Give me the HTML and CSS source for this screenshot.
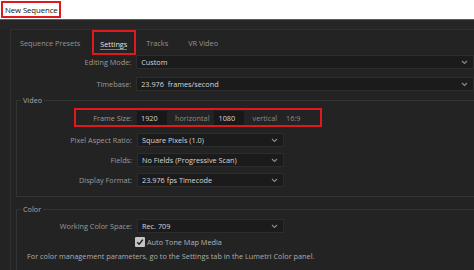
FILE: index.html
```html
<!DOCTYPE html>
<html>
<head>
<meta charset="utf-8">
<link rel="stylesheet" href="styles.css">
</head>
<body>
<header class="titlebar">
  <span class="title mark">New Sequence</span>
</header>
<main class="dialog">
  <section class="tabpanel">
    <nav class="tabs">
      <span class="tab first">Sequence Presets</span>
      <span class="tab active mark"><span class="tab-text">Settings</span></span>
      <span class="tab">Tracks</span>
      <span class="tab">VR Video</span>
    </nav>
    <div class="top-rows">
      <div class="row">
        <span class="label">Editing Mode:</span>
        <span class="select wide"><span class="value">Custom</span><svg class="chev" width="7" height="5" viewBox="0 0 7 5"><path d="M1 1 L3.5 3.5 L6 1" fill="none" stroke="#8a8a8a" stroke-width="1.1"/></svg></span>
      </div>
      <div class="row">
        <span class="label">Timebase:</span>
        <span class="select wide"><span class="value">23.976&nbsp; frames/second</span><svg class="chev" width="7" height="5" viewBox="0 0 7 5"><path d="M1 1 L3.5 3.5 L6 1" fill="none" stroke="#8a8a8a" stroke-width="1.1"/></svg></span>
      </div>
    </div>
    <fieldset class="group video">
      <legend class="legend">Video</legend>
      <div class="frame-row mark">
        <span class="label frame-label">Frame Size:</span>
        <span class="num">1920</span>
        <span class="unit">horizontal</span>
        <span class="num">1080</span>
        <span class="unit">vertical</span>
        <span class="unit ratio">16:9</span>
      </div>
      <div class="row g">
        <span class="label">Pixel Aspect Ratio:</span>
        <span class="select"><span class="value">Square Pixels (1.0)</span><svg class="chev" width="7" height="5" viewBox="0 0 7 5"><path d="M1 1 L3.5 3.5 L6 1" fill="none" stroke="#8a8a8a" stroke-width="1.1"/></svg></span>
      </div>
      <div class="row g">
        <span class="label">Fields:</span>
        <span class="select"><span class="value">No Fields (Progressive Scan)</span><svg class="chev" width="7" height="5" viewBox="0 0 7 5"><path d="M1 1 L3.5 3.5 L6 1" fill="none" stroke="#8a8a8a" stroke-width="1.1"/></svg></span>
      </div>
      <div class="row g">
        <span class="label">Display Format:</span>
        <span class="select"><span class="value">23.976 fps Timecode</span><svg class="chev" width="7" height="5" viewBox="0 0 7 5"><path d="M1 1 L3.5 3.5 L6 1" fill="none" stroke="#8a8a8a" stroke-width="1.1"/></svg></span>
      </div>
    </fieldset>
    <fieldset class="group color">
      <legend class="legend">Color</legend>
      <div class="row g wcs">
        <span class="label">Working Color Space:</span>
        <span class="select"><span class="value">Rec. 709</span><svg class="chev" width="7" height="5" viewBox="0 0 7 5"><path d="M1 1 L3.5 3.5 L6 1" fill="none" stroke="#8a8a8a" stroke-width="1.1"/></svg></span>
      </div>
      <div class="check-row">
        <span class="checkbox"><svg width="10" height="10" viewBox="0 0 10 10"><path d="M2.2 5.2 L4.2 7.2 L7.8 2.6" fill="none" stroke="#1e1e1e" stroke-width="1.5"/></svg></span>
        <span class="check-label">Auto Tone Map Media</span>
      </div>
      <p class="info">For color management parameters, go to the Settings tab in the Lumetri Color panel.</p>
    </fieldset>
  </section>
</main>
</body>
</html>
```
FILE: styles.css
```css
* { box-sizing: border-box; }
html, body {
  margin: 0;
  padding: 0;
}
body {
  width: 474px;
  height: 270px;
  overflow: hidden;
  background: #232323;
  font-family: "Open Sans", "Liberation Sans", sans-serif;
  font-size: 7.3px;
  line-height: 10px;
  color: #a2a2a2;
}
.mark {
  border: 2px solid #de1a1f;
}
.titlebar {
  height: 20px;
  background: #ffffff;
  border-bottom: 1px solid #5c5c5c;
  padding: 1px 0 0 1px;
}
.title {
  display: inline-flex;
  align-items: center;
  height: 17px;
  width: 60px;
  padding-left: 2px;
  color: #111;
  font-size: 7.8px;
  letter-spacing: -0.1px;
}
.dialog {
  height: 250px;
  padding: 9px 0 0 10px;
  background: linear-gradient(#262626 0, #262626 9px, #232323 9px);
}
.tabpanel {
  height: 100%;
  border-top: 1px solid #303030;
  border-left: 1px solid #303030;
}
.tabs {
  display: flex;
  height: 25px;
  align-items: stretch;
}
.tab {
  display: flex;
  align-items: center;
  padding: 0 10px;
  color: #939393;
}
.tab.first { padding: 0 12px 0 9px; }
.tab.active {
  padding: 0 7px 0 6px;
  color: #e2e2e2;
}
.tab-text {
  border-bottom: 1px solid #3b8de3;
  padding-top: 1px;
  margin-top: 2px;
}
.top-rows {
  display: flex;
  flex-direction: column;
  gap: 8px;
}
.row {
  display: flex;
  align-items: center;
  height: 14px;
}
.label {
  width: 121px;
  text-align: right;
  margin-right: 5px;
  color: #9b9b9b;
  white-space: nowrap;
}
.g .label { width: 115px; }
.select {
  position: relative;
  display: flex;
  align-items: center;
  justify-content: space-between;
  height: 14px;
  width: 147px;
  padding: 0 5px 0 4px;
  background: #1b1b1b;
  border: 1px solid #2c2c2c;
  color: #d6d6d6;
}
.select.wide { width: 340px; }
.chev { flex: none; }
.group {
  margin: 4px -20px 0 5px;
  padding: 0 0 9px 0;
  border: 1px solid #343434;
  min-width: 0;
}
.legend {
  margin-left: 4px;
  padding: 0 2px;
  color: #a6a6a6;
  line-height: 10px;
}
.frame-row {
  display: flex;
  align-items: center;
  height: 19px;
  width: 248px;
  margin: 3px 0 3px 57px;
}
.frame-label { width: 56px; margin-right: 5px; }
.num {
  display: flex;
  align-items: center;
  height: 14px;
  width: 30px;
  padding-left: 4px;
  background: #181818;
  color: #d6d6d6;
}
.unit {
  margin-left: 8px;
  margin-right: 5px;
  color: #8c8c8c;
}
.unit.ratio { margin-left: 4px; }
.g { margin-top: 6px; }
.video .g:first-of-type { margin-top: 0; }
.color {
  margin-top: 7px;
  padding-bottom: 20px;
}
.wcs { margin-top: 5px; }
.check-row {
  display: flex;
  align-items: center;
  margin: 4px 0 0 118px;
  height: 10px;
}
.checkbox {
  display: flex;
  width: 10px;
  height: 10px;
  background: #c4c4c4;
  border-radius: 1px;
  margin-right: 2px;
}
.check-label { color: #b4b4b4; }
.info {
  margin: 4px 0 0 10px;
  color: #adadad;
  white-space: nowrap;
}
```
